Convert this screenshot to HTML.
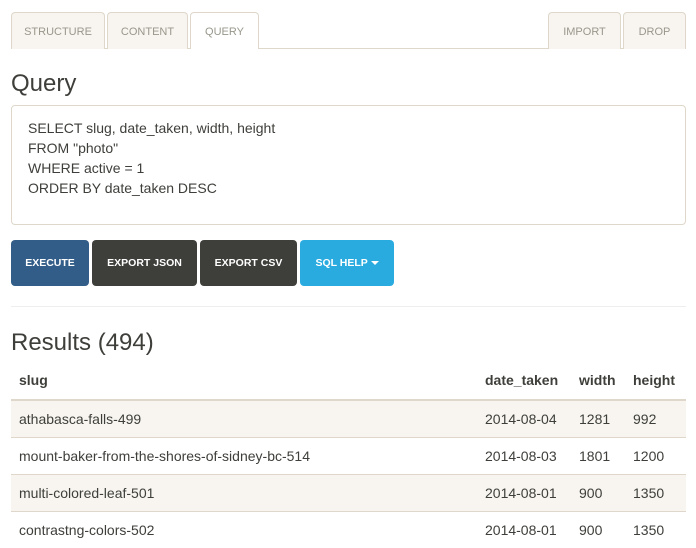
<!DOCTYPE html>
<html><head><style>
*{box-sizing:border-box;margin:0;padding:0}
body{width:696px;height:548px;background:#fff;font-family:"Liberation Sans",sans-serif;color:#3e3f3a;position:relative;overflow:hidden}
.a{position:absolute}
.tab{position:absolute;top:12px;height:37px;border:1px solid #dfd7ca;border-bottom:none;border-radius:4px 4px 0 0;background:#f8f5f0;color:#98978b;font-size:11px;text-align:center;line-height:38px}
.btn{position:absolute;top:240px;height:46px;border-radius:4px;color:#fff;font-size:10.5px;font-weight:bold;text-align:center;line-height:46px}
.row{position:absolute;left:11px;width:675px;height:37px;border-top:1px solid #dfd7ca;font-size:14px;line-height:36px}
.row span{position:absolute}
</style></head><body>
<div class="a" style="left:11px;top:48px;width:675px;height:1px;background:#dfd7ca"></div>
<div class="tab" style="left:11px;width:94px">STRUCTURE</div>
<div class="tab" style="left:107px;width:81px">CONTENT</div>
<div class="tab" style="left:190px;width:69px;height:37px;background:#fff">QUERY</div>
<div class="tab" style="left:548px;width:73px">IMPORT</div>
<div class="tab" style="left:623px;width:63px">DROP</div>
<div class="a" style="left:11px;top:70px;font-size:24px">Query</div>
<div class="a" style="left:11px;top:105px;width:675px;height:120px;border:1px solid #dfd7ca;border-radius:4px;padding:12px 16px;font-size:14px;line-height:20px">SELECT slug, date_taken, width, height<br>FROM "photo"<br>WHERE active = 1<br>ORDER BY date_taken DESC</div>
<div class="btn" style="left:11px;width:78px;background:#325d88">EXECUTE</div>
<div class="btn" style="left:92px;width:105px;background:#3e3f3a">EXPORT JSON</div>
<div class="btn" style="left:200px;width:97px;background:#3e3f3a">EXPORT CSV</div>
<div class="btn" style="left:300px;width:94px;background:#29abe0">SQL HELP <span style="display:inline-block;border-left:4px solid transparent;border-right:4px solid transparent;border-top:4px solid #fff;vertical-align:middle"></span></div>
<div class="a" style="left:11px;top:306px;width:675px;height:1px;background:#eee"></div>
<div class="a" style="left:11px;top:329px;font-size:24px">Results (494)</div>
<div class="a" style="left:11px;top:372px;width:675px;height:20px;font-size:14px;font-weight:bold">
<span class="a" style="left:8px">slug</span><span class="a" style="left:474px">date_taken</span><span class="a" style="left:568px">width</span><span class="a" style="left:622px">height</span></div>
<div class="a" style="left:11px;top:399px;width:675px;height:3px;background:#dfd7ca"></div>
<div class="row" style="top:401px;border-top:none;background:#f8f5f0"><span style="left:8px">athabasca-falls-499</span><span style="left:474px">2014-08-04</span><span style="left:568px">1281</span><span style="left:622px">992</span></div>
<div class="row" style="top:437px"><span style="left:8px">mount-baker-from-the-shores-of-sidney-bc-514</span><span style="left:474px">2014-08-03</span><span style="left:568px">1801</span><span style="left:622px">1200</span></div>
<div class="row" style="top:474px;background:#f8f5f0"><span style="left:8px">multi-colored-leaf-501</span><span style="left:474px">2014-08-01</span><span style="left:568px">900</span><span style="left:622px">1350</span></div>
<div class="row" style="top:511px"><span style="left:8px">contrastng-colors-502</span><span style="left:474px">2014-08-01</span><span style="left:568px">900</span><span style="left:622px">1350</span></div>
</body></html>
